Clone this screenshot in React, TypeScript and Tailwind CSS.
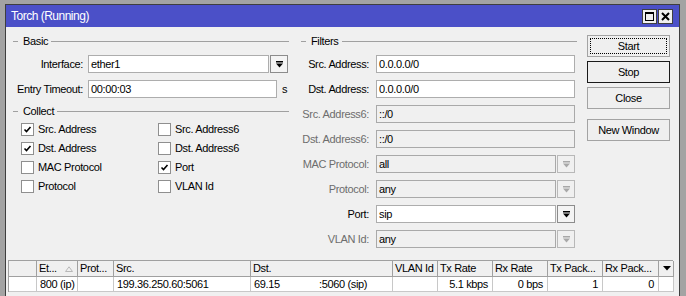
import React from "react";

const font = "font-['Liberation_Sans',Arial,sans-serif]";

const Heading = ({ title }: { title: string }) => (
  <div className="flex h-[13px] items-center">
    <div className="h-px w-[5px] bg-[#a0a0a0]" />
    <span className="ml-[5px] mr-[3px] leading-none">{title}</span>
    <div className="h-px flex-1 bg-[#a0a0a0]" />
  </div>
);

const DropArrow = ({ color }: { color: string }) => (
  <svg width="7" height="7" viewBox="0 0 7 7">
    <rect x="0" y="0" width="7" height="1.5" fill={color} />
    <path d="M0 2.5 H7 L3.5 6.5 Z" fill={color} />
  </svg>
);

const DropBtn = ({ disabled }: { disabled?: boolean }) => (
  <div
    className={
      disabled
        ? "ml-[1px] flex h-[18px] w-[18px] items-center justify-center border border-[#b8b8b8] bg-[#f0f0f0]"
        : "ml-[1px] flex h-[18px] w-[18px] items-center justify-center border border-[#8c8c8c] bg-[#f4f4f4]"
    }
  >
    <DropArrow color={disabled ? "#a8a8a8" : "#000"} />
  </div>
);

const Input = ({ value, width, disabled }: { value: string; width: string; disabled?: boolean }) => (
  <div
    className={
      (disabled ? "border-[#a9a9a9] bg-[#f0f0f0] " : "border-[#adadad] bg-white ") +
      `flex h-[18px] items-center border pl-[2px] text-black ${width}`
    }
  >
    {value}
  </div>
);

const Check = ({ checked, label }: { checked?: boolean; label: string }) => (
  <div className="flex h-[19px] items-center">
    <div className="flex h-[13px] w-[13px] items-center justify-center border border-[#8f8f8f] bg-white">
      {checked && (
        <svg width="9" height="9" viewBox="0 0 9 9">
          <path d="M1.5 4.5 L3.5 6.5 L7.5 2" fill="none" stroke="#000" strokeWidth="1.6" />
        </svg>
      )}
    </div>
    <span className="ml-[4px]">{label}</span>
  </div>
);

const FilterRow = ({
  label,
  value,
  disabled,
  drop,
}: {
  label: string;
  value: string;
  disabled?: boolean;
  drop?: boolean;
}) => (
  <div className="flex h-[18px] items-center">
    <div className={`flex w-[68px] justify-end whitespace-nowrap ${disabled ? "text-[#6d6d6d]" : "text-black"}`}>
      {label}
    </div>
    <div className="ml-[7px] flex">
      {drop ? (
        <>
          <Input value={value} width="w-[180px]" disabled={disabled} />
          <DropBtn disabled={disabled} />
        </>
      ) : (
        <Input value={value} width="w-[199px]" disabled={disabled} />
      )}
    </div>
  </div>
);

const Button = ({ label, focus, dflt }: { label: string; focus?: boolean; dflt?: boolean }) => (
  <div
    className={`relative flex h-[22px] w-[83px] items-center justify-center border bg-[#efefef] ${
      dflt ? "border-[#1a1a1a]" : "border-[#a3a3a3]"
    }`}
  >
    {focus && <div className="absolute inset-[2px] border border-dotted border-black" />}
    <span>{label}</span>
  </div>
);

export default function App() {
  const head = "flex h-[16px] items-center border-b border-r border-[#a0a0a0] bg-[#f0f0f0] pl-[2px] whitespace-nowrap";
  const cell = "flex h-[15px] items-center border-b border-r border-[#c8c8c8] bg-white whitespace-nowrap";
  return (
    <div className={`h-[296px] w-[686px] overflow-hidden bg-[#a3a3a3] pl-[5px] pt-[4px] text-[11px] tracking-[-0.35px] text-black ${font}`}>
      <div className="h-[300px] w-[675px] border border-[#3e3e3e] bg-[#f0f0f0]">
        {/* title bar */}
        <div className="flex h-[22px] items-center bg-[#4b50c8] pl-[5px] pr-[6px]">
          <span className="text-[12px] tracking-[-0.5px] text-white">Torch (Running)</span>
          <div className="ml-auto flex gap-px">
            <div className="flex h-[15px] w-[15px] items-center justify-center border border-[#404040] bg-[#f0f0f0]">
              <div className="h-[9px] w-[9px] border border-t-2 border-black" />
            </div>
            <div className="flex h-[15px] w-[15px] items-center justify-center border border-[#404040] bg-[#f0f0f0]">
              <svg width="9" height="9" viewBox="0 0 9 9">
                <path d="M1 1 L8 8 M8 1 L1 8" stroke="#000" strokeWidth="2" />
              </svg>
            </div>
          </div>
        </div>

        {/* form */}
        <div className="flex h-[233px] pl-[7px]">
          <div className="flex w-[276px] flex-col pt-[8px]">
            <Heading title="Basic" />
            <div className="mt-[7px] flex h-[18px] items-center">
              <div className="w-[70px] whitespace-nowrap text-right">Interface:</div>
              <div className="ml-[5px] flex">
                <Input value="ether1" width="w-[181px]" />
                <DropBtn />
              </div>
            </div>
            <div className="mt-[7px] flex h-[18px] items-center">
              <div className="w-[70px] whitespace-nowrap text-right">Entry Timeout:</div>
              <div className="ml-[5px]">
                <Input value="00:00:03" width="w-[189px]" />
              </div>
              <span className="ml-[5px]">s</span>
            </div>
            <div className="mt-[7px]">
              <Heading title="Collect" />
            </div>
            <div className="mt-[2px] grid grid-cols-[137px_1fr] pl-[8px]">
              <Check checked label="Src. Address" />
              <Check label="Src. Address6" />
              <Check checked label="Dst. Address" />
              <Check label="Dst. Address6" />
              <Check label="MAC Protocol" />
              <Check checked label="Port" />
              <Check label="Protocol" />
              <Check label="VLAN Id" />
            </div>
          </div>

          <div className="ml-[12px] flex w-[276px] flex-col pt-[8px]">
            <Heading title="Filters" />
            <div className="mt-[7px] flex flex-col gap-[7px]">
              <FilterRow label="Src. Address:" value="0.0.0.0/0" />
              <FilterRow label="Dst. Address:" value="0.0.0.0/0" />
              <FilterRow label="Src. Address6:" value="::/0" disabled />
              <FilterRow label="Dst. Address6:" value="::/0" disabled />
              <FilterRow label="MAC Protocol:" value="all" disabled drop />
              <FilterRow label="Protocol:" value="any" disabled drop />
              <FilterRow label="Port:" value="sip" drop />
              <FilterRow label="VLAN Id:" value="any" disabled drop />
            </div>
          </div>

          <div className="ml-[10px] flex w-[83px] flex-col pt-[8px]">
            <Button label="Start" focus />
            <div className="mt-[4px]">
              <Button label="Stop" dflt />
            </div>
            <div className="mt-[4px]">
              <Button label="Close" />
            </div>
            <div className="mt-[10px]">
              <Button label="New Window" />
            </div>
          </div>
        </div>

        {/* table */}
        <div className="ml-[2px] w-[665px] border-l border-t border-[#a0a0a0] bg-white">
          <div className="grid grid-cols-[28px_41px_36px_137px_142px_45px_55px_55px_55px_56px_15px]">
            <div className={head} />
            <div className={head}>
              <span>Et...</span>
              <svg className="ml-auto mr-[4px]" width="8" height="6" viewBox="0 0 8 6">
                <path d="M0.5 5.5 L4 0.8 L7.5 5.5 Z" fill="none" stroke="#b8b8b8" strokeWidth="1" />
              </svg>
            </div>
            <div className={head}>Prot...</div>
            <div className={head}>Src.</div>
            <div className={head}>Dst.</div>
            <div className={head}>VLAN Id</div>
            <div className={head}>Tx Rate</div>
            <div className={head}>Rx Rate</div>
            <div className={head}>Tx Pack...</div>
            <div className={head}>Rx Pack...</div>
            <div className={`${head} justify-center pl-0`}>
              <svg width="8" height="5" viewBox="0 0 8 5">
                <path d="M0 0 H8 L4 4.5 Z" fill="#000" />
              </svg>
            </div>

            <div className={cell} />
            <div className={`${cell} pl-[3px]`}>800 (ip)</div>
            <div className={cell} />
            <div className={`${cell} pl-[3px]`}>199.36.250.60:5061</div>
            <div className={`${cell} pl-[3px]`}>
              <span className="w-[65px]">69.15</span>
              <span>:5060 (sip)</span>
            </div>
            <div className={cell} />
            <div className={`${cell} justify-end pr-[4px]`}>5.1 kbps</div>
            <div className={`${cell} justify-end pr-[4px]`}>0 bps</div>
            <div className={`${cell} justify-end pr-[4px]`}>1</div>
            <div className={`${cell} justify-end pr-[4px]`}>0</div>
            <div className={cell} />
          </div>
        </div>
      </div>
    </div>
  );
}
